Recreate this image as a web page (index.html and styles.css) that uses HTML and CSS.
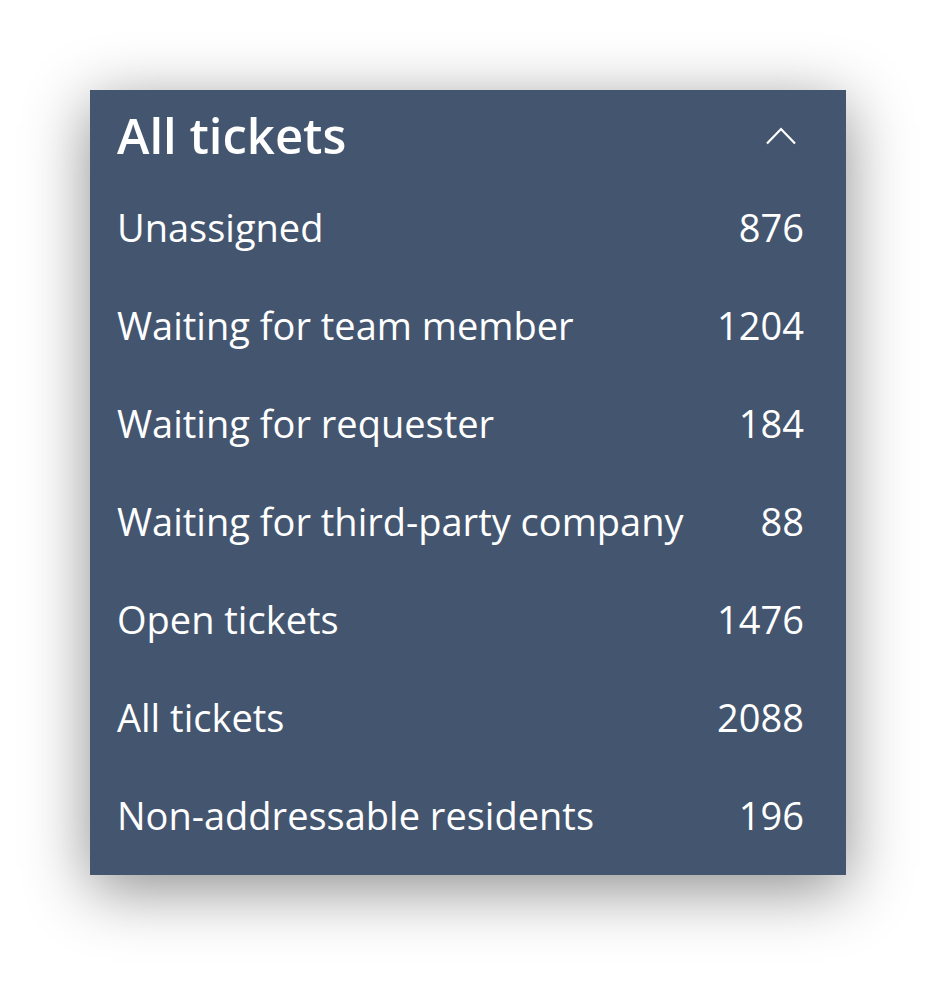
FILE: index.html
```html
<!DOCTYPE html>
<html lang="en">
<head>
    <meta charset="UTF-8">
    <title>All tickets</title>
    <link rel="stylesheet" href="styles.css">
</head>
<body>
    <div class="ticket-panel">
        <div class="panel-header">
            <h1>All tickets</h1>
            <svg class="chevron" width="32" height="22" viewBox="0 0 32 22" fill="none">
                <path d="M2 19.5 L16 5 L30 19.5" stroke="#ffffff" stroke-width="2.2"/>
            </svg>
        </div>
        <ul class="ticket-list">
            <li><span>Unassigned</span><span class="count">876</span></li>
            <li><span>Waiting for team member</span><span class="count">1204</span></li>
            <li><span>Waiting for requester</span><span class="count">184</span></li>
            <li><span>Waiting for third-party company</span><span class="count">88</span></li>
            <li><span>Open tickets</span><span class="count">1476</span></li>
            <li><span>All tickets</span><span class="count">2088</span></li>
            <li><span>Non-addressable residents</span><span class="count">196</span></li>
        </ul>
    </div>
</body>
</html>
```

FILE: styles.css
```css
:root {
    --panel-bg: #44566f;
    --text-color: #ffffff;
}

* {
    box-sizing: border-box;
    margin: 0;
    padding: 0;
}

html, body {
    background: #ffffff;
}

body {
    font-family: 'Open Sans', 'Noto Sans', sans-serif;
    color: var(--text-color);
    min-height: 100vh;
    padding: 90px 0 0 90px;
}

.ticket-panel {
    width: 756px;
    padding: 0 42px 11px 27px;
    background-color: var(--panel-bg);
    box-shadow: 0 14px 60px rgba(0, 0, 0, 0.45);
}

.panel-header {
    height: 88px;
    display: flex;
    align-items: center;
    justify-content: space-between;
}

.panel-header h1 {
    font-size: 49px;
    font-weight: 600;
    padding-top: 2px;
}

.chevron {
    margin-right: 7px;
    margin-top: 2px;
}

.ticket-list {
    list-style: none;
}

.ticket-list li {
    height: 98px;
    display: flex;
    align-items: center;
    justify-content: space-between;
    font-size: 38px;
}
```
